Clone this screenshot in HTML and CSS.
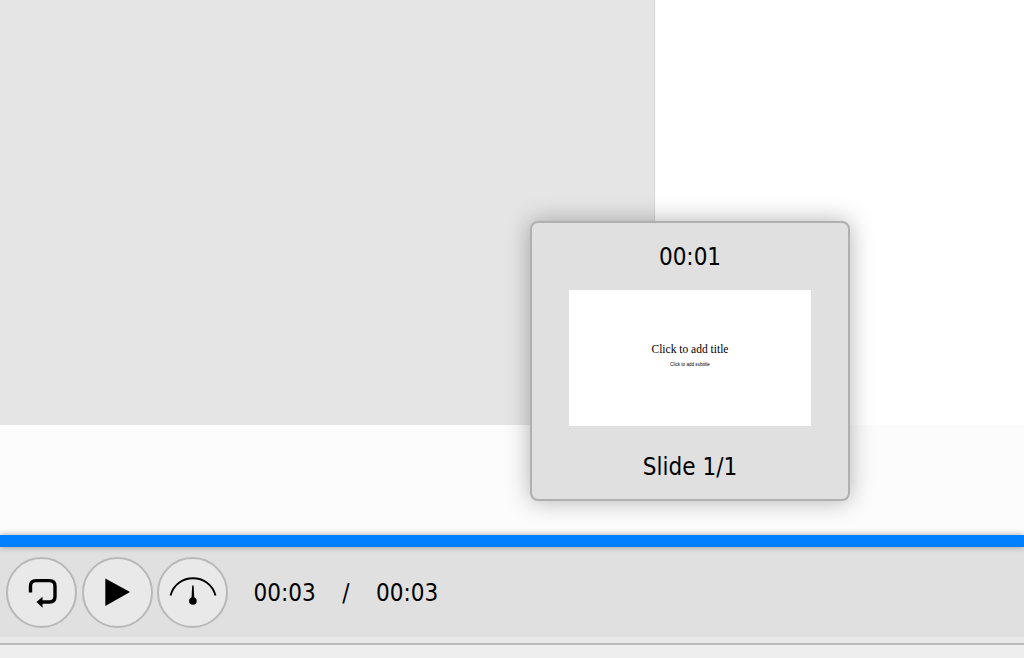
FILE: index.html
```html
<!DOCTYPE html>
<html lang="en">
<head>
    <meta charset="UTF-8">
    <meta name="viewport" content="width=device-width, initial-scale=1.0">
    <title>Slide Player</title>
    <link rel="stylesheet" href="styles.css">
</head>
<body>
    <div class="stage">
        <div class="stage-top">
            <div class="stage-left"></div>
            <div class="stage-right"></div>
        </div>
        <div class="stage-bottom"></div>
    </div>

    <div class="progress"></div>

    <div class="controls">
        <button class="round-btn" aria-label="Replay">
            <svg width="32" height="32" viewBox="0 0 32 32">
                <path d="M4.5 16.5V10Q4.5 4.6 10 4.6H23.5Q29 4.6 29 10V20.5Q29 26 23.5 26H15" fill="none" stroke="#000" stroke-width="3.4"/>
                <path d="M16.5 20.7V31.7L10.5 26Z" fill="#000"/>
            </svg>
        </button>
        <button class="round-btn" aria-label="Play">
            <svg width="32" height="32" viewBox="0 0 32 32">
                <path d="M4.3 2.5L29 16L4.3 30Z" fill="#000"/>
            </svg>
        </button>
        <button class="round-btn" aria-label="Speed">
            <svg width="50" height="32" viewBox="0 0 50 32">
                <path d="M2.5 19.5C9 -3.5 41 -3.5 47.5 19.5" fill="none" stroke="#000" stroke-width="1.9"/>
                <path d="M24.2 9.5H25.6L26.4 24H23.4Z" fill="#000"/>
                <circle cx="24.9" cy="25" r="3.8" fill="#000"/>
            </svg>
        </button>
        <div class="time">
            <span>00:03</span>
            <span>/</span>
            <span>00:03</span>
        </div>
    </div>

    <div class="footer-gap"></div>
    <div class="footer"></div>

    <div class="preview">
        <div class="preview-time">00:01</div>
        <div class="thumb">
            <div class="thumb-title">Click to add title</div>
            <div class="thumb-sub">Click to add subtitle</div>
        </div>
        <div class="preview-label">Slide 1/1</div>
    </div>
</body>
</html>
```

FILE: styles.css
```css
html, body {
    height: 100%;
}

body {
    margin: 0;
    overflow: hidden;
    font-family: "DejaVu Sans Condensed", "DejaVu Sans", sans-serif;
    color: #000;
    background: #fff;
}

.stage-top {
    display: flex;
    height: 425px;
}

.stage-left {
    box-sizing: border-box;
    width: 655px;
    background: #e5e5e5;
    border-right: 1px solid #d4d4d4;
}

.stage-right {
    flex: 1;
    background: #fff;
}

.stage-bottom {
    height: 110px;
    background: #fcfcfc;
}

.progress {
    height: 12px;
    background: #0080ff;
    box-shadow: 0 0 6px rgba(0, 0, 0, 0.35);
    position: relative;
}

.controls {
    display: flex;
    align-items: center;
    gap: 4.5px;
    height: 90px;
    padding-left: 6px;
    background: #e0e0e0;
}

.round-btn {
    display: flex;
    align-items: center;
    justify-content: center;
    box-sizing: border-box;
    width: 71px;
    height: 71px;
    padding: 0;
    border: 2px solid #b8b8b8;
    border-radius: 50%;
    background: #e9e9e9;
}

.time {
    display: flex;
    gap: 26.5px;
    margin-top: 2px;
    margin-left: 21px;
    font-size: 24px;
}

.footer-gap {
    height: 6px;
    background: #e8e8e8;
}

.footer {
    height: 15px;
    background: #eee;
    border-top: 2px solid #bbb;
}

.preview {
    position: absolute;
    left: 530px;
    top: 221px;
    width: 320px;
    height: 280px;
    box-sizing: border-box;
    border: 2px solid #b0b0b0;
    border-radius: 8px;
    background: #e0e0e0;
    box-shadow: 0 0 24px rgba(0, 0, 0, 0.3);
    display: flex;
    flex-direction: column;
    align-items: center;
}

.preview-time {
    margin-top: 19px;
    font-size: 24px;
    line-height: 30px;
}

.thumb {
    margin-top: 18px;
    width: 242px;
    height: 136px;
    background: #fff;
    display: flex;
    flex-direction: column;
    align-items: center;
    font-family: "Liberation Serif", serif;
}

.thumb-title {
    margin-top: 52px;
    font-size: 11.5px;
    line-height: 15px;
}

.thumb-sub {
    margin-top: 5px;
    font-family: "Liberation Sans", sans-serif;
    font-size: 4.6px;
    line-height: 6px;
}

.preview-label {
    margin-top: 25px;
    font-size: 24px;
    line-height: 32px;
}
```
